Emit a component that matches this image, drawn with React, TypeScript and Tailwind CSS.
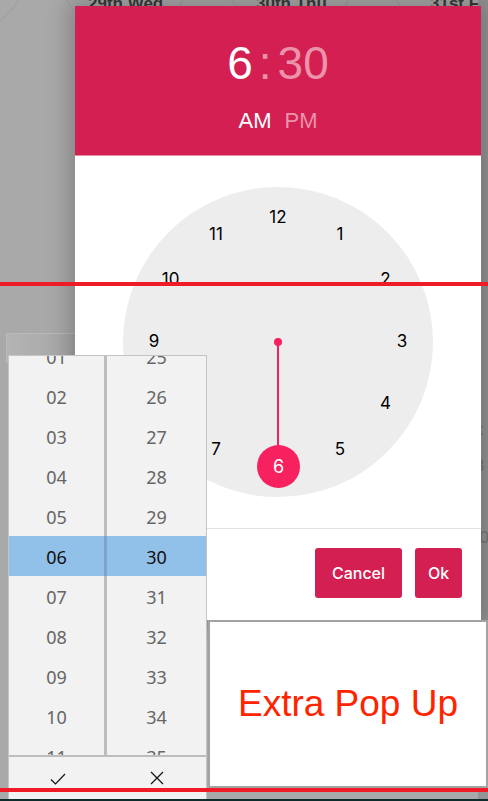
import React from 'react';

const hours = ['01', '02', '03', '04', '05', '06', '07', '08', '09', '10', '11'];
const minutes = ['25', '26', '27', '28', '29', '30', '31', '32', '33', '34', '35'];

function ClockFace() {
    const nums = [12, 1, 2, 3, 4, 5, 6, 7, 8, 9, 10, 11];
    const r = 124;
    return (
        <div className="relative w-[310px] h-[310px] rounded-full bg-[#ededed]">
            {nums.map((n, i) => {
                const a = (i * Math.PI) / 6;
                const x = 155 + r * Math.sin(a);
                const y = 155 - r * Math.cos(a);
                if (n === 6) return null;
                return (
                    <span
                        key={n}
                        className="absolute w-[40px] h-[24px] -ml-[20px] -mt-[12px] flex items-center justify-center text-[17px] text-black"
                        style={{ left: x, top: y }}
                    >
                        {n}
                    </span>
                );
            })}
            {/* hand */}
            <div className="absolute left-[154px] top-[155px] w-[2px] h-[104px] bg-[#f7215f]" />
            <div className="absolute left-[151px] top-[151px] w-[8px] h-[8px] rounded-full bg-[#f7215f]" />
            <div className="absolute left-[134px] top-[258px] w-[43px] h-[43px] rounded-full bg-[#f7215f] flex items-center justify-center text-white text-[18px]">
                6
            </div>
        </div>
    );
}

function Picker() {
    return (
        <div className="absolute left-[8px] top-[355px] w-[199px] h-[445px] bg-[#f2f2f2] border border-[#c4c4c4] flex flex-col font-['Noto_Sans',sans-serif]">
            <div className="h-[400px] overflow-hidden">
                <div className="-mt-[20px]">
                    {hours.map((h, i) => {
                        const sel = h === '06';
                        return (
                            <div key={h} className={`flex h-[40px] ${sel ? 'bg-[#91c0e8]' : ''}`}>
                                <div className={`w-[95px] flex items-center justify-center pt-[3px] text-[18px] ${sel ? 'text-[#111]' : 'text-[#666]'}`}>
                                    {h}
                                </div>
                                <div className={`w-[3px] ${sel ? 'bg-[#7ea5c7]' : 'bg-[#bdbdbd]'}`} />
                                <div className={`flex-1 flex items-center justify-center pt-[3px] text-[18px] ${sel ? 'text-[#111]' : 'text-[#666]'}`}>
                                    {minutes[i]}
                                </div>
                            </div>
                        );
                    })}
                </div>
            </div>
            <div className="h-[2px] bg-[#bdbdbd]" />
            <div className="flex h-[42px]">
                <div className="w-[98px] flex justify-center pt-[16px]">
                    <svg width="16" height="12" viewBox="0 0 16 12" fill="none" stroke="#111" strokeWidth="1.2">
                        <path d="M1 6.5 L5.5 11 L15 1" />
                    </svg>
                </div>
                <div className="flex-1 flex justify-center pt-[14px]">
                    <svg width="14" height="14" viewBox="0 0 14 14" fill="none" stroke="#111" strokeWidth="1.2">
                        <path d="M1 1 L13 13 M13 1 L1 13" />
                    </svg>
                </div>
            </div>
        </div>
    );
}

export default function App() {
    const rightCol = ['c', '', '7', '7', '8', '8', '9', '9', '0:', ':3', '0', '30', '', '', '1', '0'];
    return (
        <div className="relative w-[488px] h-[801px] overflow-hidden bg-[#a9a9a9] font-['Liberation_Sans',sans-serif]">
            {/* page behind the overlay */}
            {[-40, 125, 290, 455].map((cx) => (
                <div
                    key={cx}
                    className="absolute w-[134px] h-[134px] rounded-full border border-[#9d9d9d]"
                    style={{ left: cx - 67, top: -99 }}
                />
            ))}
            <span className="absolute left-[88px] -top-[9px] whitespace-nowrap text-[17px] font-bold text-[#3a3a3a]">29th Wed</span>
            <span className="absolute left-[256px] -top-[9px] whitespace-nowrap text-[17px] font-bold text-[#3a3a3a]">30th Thu</span>
            <span className="absolute left-[430px] -top-[9px] whitespace-nowrap text-[17px] font-bold text-[#3a3a3a]">31st Fri</span>
            <div className="absolute left-[478px] top-[0px] w-[10px] h-[801px] bg-[#949494]" />
            <div className="absolute left-[470px] top-[124px] w-[30px] flex flex-col text-[17px] leading-[36px]">
                {rightCol.map((t, i) => (
                    <span key={i} className={`h-[36px] ${i === 0 ? 'text-[#222] font-bold' : 'text-[#777]'}`}>
                        {t}
                    </span>
                ))}
            </div>
            <div className="absolute left-[6px] top-[333px] w-[80px] h-[30px] bg-gradient-to-r from-[#b4b4b4] to-[#a4a4a4] border border-[#b9b9b9] text-[18px] text-[#222] pl-[44px] pt-[14px] font-['Noto_Sans',sans-serif]">
                00:0
            </div>

            {/* time dialog */}
            <div className="absolute left-[75px] top-[6px] w-[406px] h-[614px] bg-white flex flex-col shadow-[0_0_22px_6px_rgba(0,0,0,0.22)]">
                <div className="h-[150px] bg-[#d31f51] border-b border-[#e68aa5] flex flex-col items-center pt-[34px]">
                    <div className="flex items-baseline text-[46px] leading-none">
                        <span className="text-white">6</span>
                        <span className="text-[#eb93ab] mx-[6px]">:</span>
                        <span className="text-[#eb93ab]">30</span>
                    </div>
                    <div className="flex gap-[13px] text-[22px] mt-[24px] leading-none">
                        <span className="text-white">AM</span>
                        <span className="text-[#eb93ab]">PM</span>
                    </div>
                </div>
                <div className="h-[373px] flex justify-center pt-[31px] font-['Inter',sans-serif] border-b border-[#e2e2e2]">
                    <ClockFace />
                </div>
                <div className="flex justify-end gap-[13px] pt-[19px] pr-[19px] font-['Inter',sans-serif]">
                    <button className="w-[87px] h-[50px] rounded-[3px] bg-[#d31f51] text-white text-[16px] font-medium">
                        Cancel
                    </button>
                    <button className="w-[47px] h-[50px] rounded-[3px] bg-[#d31f51] text-white text-[16px] font-medium">
                        Ok
                    </button>
                </div>
            </div>

            {/* extra pop up */}
            <div className="absolute left-[208px] top-[620px] w-[280px] h-[168px] bg-white border-2 border-[#a3a3a3] flex items-center justify-center">
                <span className="text-[37px] text-[#ff2400]">Extra Pop Up</span>
            </div>

            <Picker />

            {/* guide lines */}
            <div className="absolute left-0 top-[282px] w-full h-[4px] bg-[#ee1d25]" />
            <div className="absolute left-0 top-[788px] w-full h-[4px] bg-[#ee1d25]" />
            <div className="absolute left-0 top-[799px] w-full h-[2px] bg-[#0e2b2b]" />
        </div>
    );
}
